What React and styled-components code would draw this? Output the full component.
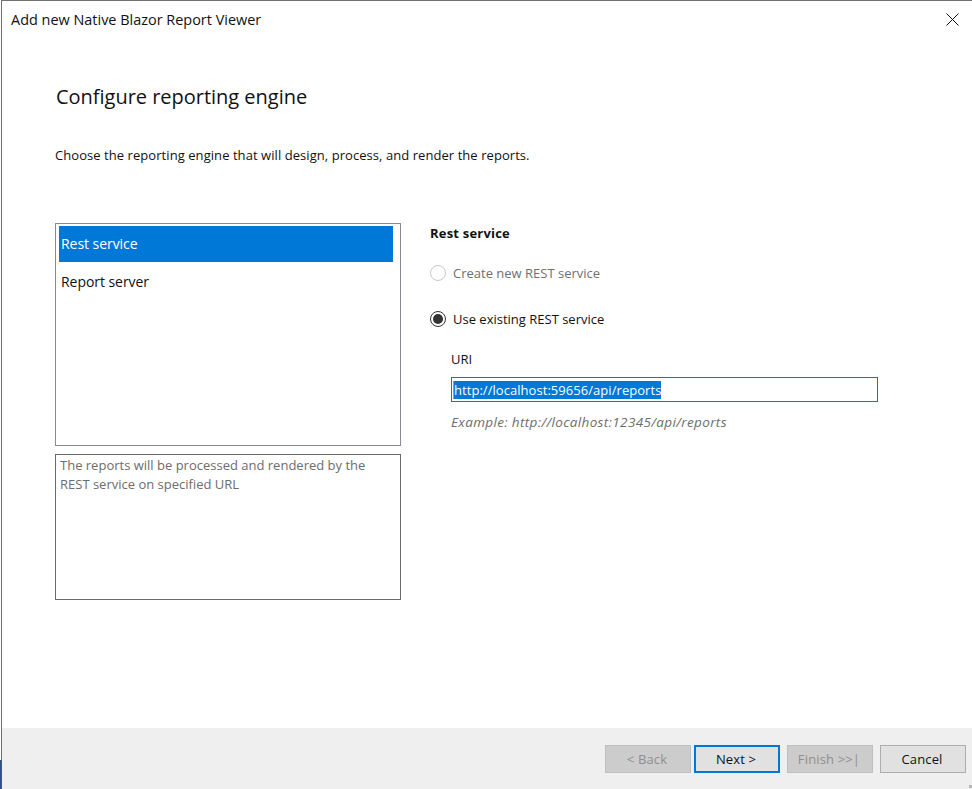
import React from "react";
import styled, { createGlobalStyle } from "styled-components";

const Global = createGlobalStyle`
  html, body { margin: 0; padding: 0; background: #fff; }
  body { font-family: "Open Sans", "Noto Sans", "Liberation Sans", sans-serif; color: #000; }
  * { box-sizing: border-box; }
`;

const Screen = styled.div`
  display: flex;
  width: 972px;
  height: 789px;
  overflow: hidden;
  background: #fff;
`;
const Edge = styled.div`
  width: 2px;
  flex: none;
  display: flex;
  flex-direction: column;
  justify-content: flex-end;
  background: linear-gradient(to right, #fff 0 1px, #6f6f6f 1px 2px);
`;
const EdgeAccent = styled.div`
  height: 29px;
  background: linear-gradient(to right, #2b4f8f 0 1px, #4b5a78 1px 2px);
`;
const Window = styled.div`
  flex: 1;
  display: flex;
  flex-direction: column;
  min-width: 0;
  border-top: 1px solid #707070;
`;
const TitleBar = styled.header`
  height: 39px;
  flex: none;
  display: flex;
  align-items: flex-start;
  justify-content: space-between;
  padding: 10px 13px 0 9px;
`;
const TitleText = styled.h1`
  margin: 0;
  font-size: 14.45px;
  font-weight: 400;
  line-height: 18px;
  color: #111;
`;
const CloseIcon = styled.svg`
  width: 13px;
  height: 13px;
  margin-top: 2px;
  display: block;
`;
const Content = styled.main`
  flex: 1;
  padding: 44px 0 0 53px;
  min-height: 0;
`;
const Heading = styled.h2`
  margin: 0 0 0 1px;
  font-size: 20px;
  font-weight: 500;
  line-height: 26px;
  letter-spacing: -0.02px;
  color: #111;
`;
const Lead = styled.p`
  margin: 37px 0 0;
  font-size: 13px;
  line-height: 17px;
  letter-spacing: 0.06px;
  color: #111;
`;
const Columns = styled.div`
  display: flex;
  margin-top: 59px;
`;
const LeftColumn = styled.div`
  width: 346px;
  flex: none;
  display: flex;
  flex-direction: column;
  gap: 8px;
`;
const ListBox = styled.ul`
  height: 223px;
  margin: 0;
  padding: 2px 7px 0 3px;
  list-style: none;
  border: 1px solid #8a8a94;
`;
const ListItem = styled.li`
  height: 36px;
  margin-bottom: ${(p) => (p.$selected ? "2px" : "0")};
  padding: 0 0 2px 2px;
  display: flex;
  align-items: center;
  font-size: 14px;
  letter-spacing: -0.05px;
  color: ${(p) => (p.$selected ? "#fff" : "#111")};
  background: ${(p) => (p.$selected ? "#0078d7" : "transparent")};
`;
const DescriptionBox = styled.div`
  height: 146px;
  padding: 1px 4px;
  border: 1px solid #6a6a6a;
  font-size: 13px;
  line-height: 19px;
  color: #6d6d6d;
`;
const RightColumn = styled.section`
  margin: 1px 0 0 29px;
  width: 448px;
  display: flex;
  flex-direction: column;
`;
const SectionTitle = styled.h3`
  margin: 0;
  font-size: 13px;
  font-weight: 700;
  line-height: 18px;
  letter-spacing: 0.2px;
  color: #111;
`;
const RadioRow = styled.label`
  display: flex;
  align-items: center;
  gap: 7px;
  height: 18px;
  margin-top: ${(p) => p.$top}px;
  font-size: 13px;
  color: ${(p) => (p.$disabled ? "#707070" : "#111")};
`;
const RadioCircle = styled.span`
  width: 16px;
  height: 16px;
  flex: none;
  border-radius: 50%;
  border: 1px solid ${(p) => (p.$disabled ? "#c8c8c8" : "#333")};
  display: flex;
  align-items: center;
  justify-content: center;
  &::after {
    content: "";
    display: ${(p) => (p.$checked ? "block" : "none")};
    width: 10px;
    height: 10px;
    border-radius: 50%;
    background: #333;
  }
`;
const FieldBlock = styled.div`
  margin: 23px 0 0 21px;
  display: flex;
  flex-direction: column;
`;
const FieldLabel = styled.div`
  font-size: 13px;
  line-height: 17px;
  color: #111;
`;
const FakeInput = styled.div`
  margin-top: 9px;
  height: 25px;
  width: 427px;
  border: 1px solid #0078d7;
  padding: 3px 0 0 1px;
  display: flex;
  align-items: flex-start;
`;
const SelectedText = styled.span`
  height: 18px;
  line-height: 18px;
  font-size: 13px;
  letter-spacing: 0.05px;
  color: #fff;
  background: #0078d7;
  border-left: 1px solid #e08a3c;
`;
const Hint = styled.div`
  margin-top: 12px;
  font-size: 13.5px;
  line-height: 17px;
  font-style: italic;
  letter-spacing: 0.35px;
  color: #6d6d6d;
`;
const Footer = styled.footer`
  height: 61px;
  flex: none;
  background: #efefef;
  display: flex;
  justify-content: flex-end;
  align-items: flex-start;
  padding: 17px 6px 0 0;
  position: relative;
`;
const Button = styled.button`
  width: 86px;
  height: 28px;
  margin-left: ${(p) => p.$gap}px;
  padding: 0 2px 0 0;
  font-family: inherit;
  font-size: 13px;
  letter-spacing: 0.15px;
  color: #111;
  background: #e1e1e1;
  border: 1px solid #adadad;
  ${(p) => p.$primary && "border: 2px solid #0078d7;"}
  ${(p) => p.$disabled && "background: #cccccc; border-color: #bfbfbf; color: #8f8f8f;"}
`;
const Grip = styled.span`
  position: absolute;
  right: 0;
  bottom: 1px;
  width: 3px;
  height: 3px;
  background: #b8b8b8;
`;

export default function App() {
  return (
    <Screen>
      <Global />
      <Edge>
        <EdgeAccent />
      </Edge>
      <Window>
        <TitleBar>
          <TitleText>Add new Native Blazor Report Viewer</TitleText>
          <CloseIcon viewBox="0 0 13 13" aria-label="Close">
            <path d="M0.5 0.5 L12.5 12.5 M12.5 0.5 L0.5 12.5" stroke="#111" strokeWidth="1" fill="none" />
          </CloseIcon>
        </TitleBar>
        <Content>
          <Heading>Configure reporting engine</Heading>
          <Lead>Choose the reporting engine that will design, process, and render the reports.</Lead>
          <Columns>
            <LeftColumn>
              <ListBox>
                <ListItem $selected>Rest service</ListItem>
                <ListItem>Report server</ListItem>
              </ListBox>
              <DescriptionBox>
                The reports will be processed and rendered by the
                <br />
                REST service on specified URL
              </DescriptionBox>
            </LeftColumn>
            <RightColumn>
              <SectionTitle>Rest service</SectionTitle>
              <RadioRow $top={22} $disabled>
                <RadioCircle $disabled />
                Create new REST service
              </RadioRow>
              <RadioRow $top={28}>
                <RadioCircle $checked />
                Use existing REST service
              </RadioRow>
              <FieldBlock>
                <FieldLabel>URI</FieldLabel>
                <FakeInput>
                  <SelectedText>http://localhost:59656/api/reports</SelectedText>
                </FakeInput>
                <Hint>Example: http://localhost:12345/api/reports</Hint>
              </FieldBlock>
            </RightColumn>
          </Columns>
        </Content>
        <Footer>
          <Button $disabled>&lt; Back</Button>
          <Button $primary $gap={3}>Next &gt;</Button>
          <Button $disabled $gap={7}>Finish &gt;&gt;|</Button>
          <Button $gap={7}>Cancel</Button>
          <Grip />
        </Footer>
      </Window>
    </Screen>
  );
}
